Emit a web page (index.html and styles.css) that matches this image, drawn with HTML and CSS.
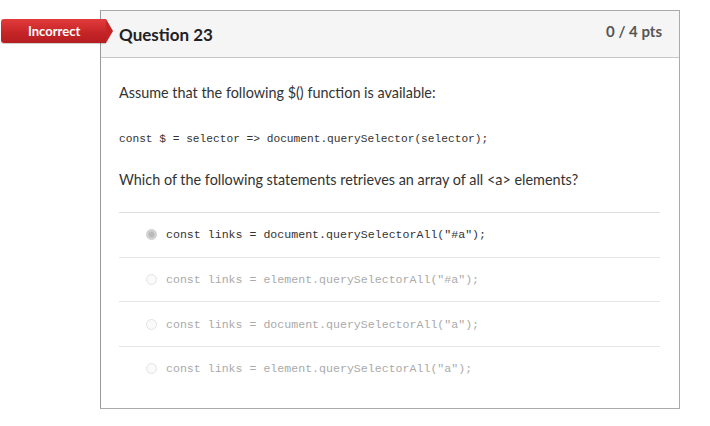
FILE: index.html
```html
<!DOCTYPE html>
<html>
<head>
<meta charset="utf-8">
<link rel="stylesheet" href="styles.css">
</head>
<body>
<div class="page">
  <div class="badge-col">
    <div class="badge">Incorrect</div>
  </div>
  <div class="card">
    <div class="card-head">
      <div class="q-title">Question 23</div>
      <div class="q-pts">0 / 4 pts</div>
    </div>
    <div class="card-body">
      <p class="text first">Assume that the following $() function is available:</p>
      <p class="code">const $ = selector =&gt; document.querySelector(selector);</p>
      <p class="text">Which of the following statements retrieves an array of all &lt;a&gt; elements?</p>
      <div class="answers">
        <div class="answer selected"><span class="radio"></span><span class="acode">const links = document.querySelectorAll("#a");</span></div>
        <div class="answer"><span class="radio"></span><span class="acode">const links = element.querySelectorAll("#a");</span></div>
        <div class="answer"><span class="radio"></span><span class="acode">const links = document.querySelectorAll("a");</span></div>
        <div class="answer"><span class="radio"></span><span class="acode">const links = element.querySelectorAll("a");</span></div>
      </div>
    </div>
  </div>
</div>
</body>
</html>
```
FILE: styles.css
```css
html, body { margin: 0; padding: 0; background: #fff; }
body { font-family: Lato, "Liberation Sans", sans-serif; color: #333; }
.page { display: flex; padding-top: 10px; }
.badge-col { width: 100px; flex: none; padding-top: 9px; padding-left: 1px; box-sizing: border-box; }
.badge {
  position: relative;
  width: 105px; height: 24px; box-sizing: border-box;
  background: linear-gradient(#e33b3c, #c42426 60%, #b51e21);
  color: #fff; font-weight: bold; font-size: 13px; line-height: 24px;
  padding-left: 27px;
  border-radius: 3px 0 0 3px;
  box-shadow: 0 1px 1px rgba(0,0,0,0.2);
  z-index: 2;
}
.badge::after {
  content: ""; position: absolute; right: -7px; top: 0;
  border-top: 12px solid transparent; border-bottom: 12px solid transparent;
  border-left: 7px solid #c42426;
}
.card { width: 580px; border: 1px solid #aaa; border-left-color: #999; box-sizing: border-box; height: 399px; }
.card-head {
  background: #f5f5f5; height: 47px; box-sizing: border-box;
  border-bottom: 1px solid #c7c7c7;
  display: flex; justify-content: space-between; align-items: flex-start;
  padding: 0 17px 0 18px;
}
.q-title { font-weight: bold; font-size: 17px; color: #222; padding-top: 13px; }
.q-pts { font-weight: bold; font-size: 15px; color: #555; padding-top: 11px; }
.card-body { padding: 26px 19px 0 18px; }
.text { margin: 0; font-size: 14.4px; color: #333; line-height: 18px; }
.text.first { margin-bottom: 29px; }
.code { margin: 0 0 24px; font-family: "Liberation Mono", monospace; font-size: 11.2px; color: #333; line-height: 16px; }
.answers { margin-top: 23px; }
.answer {
  border-top: 1px solid #e6e6e6;
  height: 44.7px; box-sizing: border-box;
  display: flex; align-items: center; padding-left: 27px;
  color: #aaa;
}
.answer:first-child { border-top-color: #ddd; }
.answer.selected { color: #333; }
.radio {
  width: 9px; height: 9px; border-radius: 50%; border: 1px solid #e3e3e3;
  background: #fafafa; margin-right: 9px; flex: none;
}
.answer.selected .radio { background: radial-gradient(circle, #bbb 40%, #d6d6d6 60%); border-color: #ccc; }
.acode { font-family: "Liberation Mono", monospace; font-size: 11.6px; }
```
